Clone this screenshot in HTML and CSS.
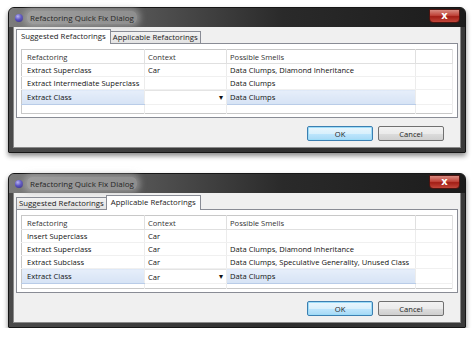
FILE: index.html
```html
<!DOCTYPE html>
<html>
  <head>
    <meta charset="utf-8" />
    <link rel="stylesheet" href="styles.css">
  </head>
  <body>
    <div class="dialog">
      <div class="titlebar">
        <span class="app-icon"></span>
        <span class="title">Refactoring Quick Fix Dialog</span>
        <span class="close">x</span>
      </div>
      <div class="client">
        <div class="tabs">
          <div class="tab active">Suggested Refactorings</div>
          <div class="tab">Applicable Refactorings</div>
        </div>
        <div class="tab-panel">
          <table class="grid">
            <colgroup>
              <col class="col-ref"><col class="col-ctx"><col class="col-smell"><col>
            </colgroup>
            <tr class="head"><td>Refactoring</td><td>Context</td><td>Possible Smells</td><td></td></tr>
            <tr><td>Extract Superclass</td><td>Car</td><td>Data Clumps, Diamond Inheritance</td><td></td></tr>
            <tr><td>Extract Intermediate Superclass</td><td></td><td>Data Clumps</td><td></td></tr>
            <tr class="selected">
              <td>Extract Class</td>
              <td class="combo-cell"><div class="combo"><span></span><span class="arrow">▾</span></div></td>
              <td>Data Clumps</td><td></td>
            </tr>
            <tr class="blank"><td></td><td></td><td></td><td></td></tr>
          </table>
        </div>
        <div class="buttons">
          <button class="btn default">OK</button>
          <button class="btn">Cancel</button>
        </div>
      </div>
    </div>

    <div class="dialog second">
      <div class="titlebar">
        <span class="app-icon"></span>
        <span class="title">Refactoring Quick Fix Dialog</span>
        <span class="close">x</span>
      </div>
      <div class="client">
        <div class="tabs">
          <div class="tab">Suggested Refactorings</div>
          <div class="tab active">Applicable Refactorings</div>
        </div>
        <div class="tab-panel">
          <table class="grid">
            <colgroup>
              <col class="col-ref"><col class="col-ctx"><col class="col-smell"><col>
            </colgroup>
            <tr class="head"><td>Refactoring</td><td>Context</td><td>Possible Smells</td><td></td></tr>
            <tr><td>Insert Superclass</td><td>Car</td><td></td><td></td></tr>
            <tr><td>Extract Superclass</td><td>Car</td><td>Data Clumps, Diamond Inheritance</td><td></td></tr>
            <tr><td>Extract Subclass</td><td>Car</td><td>Data Clumps, Speculative Generality, Unused Class</td><td></td></tr>
            <tr class="selected">
              <td>Extract Class</td>
              <td class="combo-cell"><div class="combo"><span>Car</span><span class="arrow">▾</span></div></td>
              <td>Data Clumps</td><td></td>
            </tr>
            <tr class="blank"><td></td><td></td><td></td><td></td></tr>
          </table>
        </div>
        <div class="buttons">
          <button class="btn default">OK</button>
          <button class="btn">Cancel</button>
        </div>
      </div>
    </div>
  </body>
</html>
```

FILE: styles.css
```css
body {
  margin: 0;
  padding: 7px 0 0 8px;
  background: #fff;
  font-family: "Open Sans", "DejaVu Sans", sans-serif;
  font-size: 7.6px;
  color: #111;
}

.dialog {
  width: 446px;
  padding: 0 5px 4px 5px;
  background: linear-gradient(90deg, #4a4a4a 0%, #2e2e2e 60%, #3a3a3a 100%);
  border: 1px solid #161616;
  border-radius: 6px 6px 1px 1px;
  box-sizing: content-box;
  box-shadow: 0 3px 5px rgba(0, 0, 0, 0.45);
}

.dialog.second {
  margin-top: 20px;
}

.titlebar {
  height: 19px;
  display: flex;
  align-items: center;
  position: relative;
  background: linear-gradient(90deg, #7c7c7c 0%, #5a5a5a 25%, #2a2a2a 60%, #1c1c1c 100%);
  margin: 0 -5px;
  padding: 0 6px;
  border-radius: 5px 5px 0 0;
}

.app-icon {
  width: 8px;
  height: 8px;
  border-radius: 50%;
  background: radial-gradient(circle at 35% 30%, #b9b6f0 0%, #5a52c4 45%, #2b2372 100%);
  margin-right: 4px;
  margin-top: 1px;
}

.title {
  font-size: 8px;
  color: #262626;
  padding: 1px 3px;
  background: rgba(190, 190, 190, 0.55);
  box-shadow: 0 0 6px 3px rgba(190, 190, 190, 0.55);
  border-radius: 5px;
}

.close {
  position: absolute;
  right: 5px;
  top: 1px;
  width: 31px;
  height: 14px;
  line-height: 12px;
  text-align: center;
  color: #fff;
  font-family: "DejaVu Sans", sans-serif;
  font-weight: 700;
  font-size: 10px;
  background: linear-gradient(#d88a80 0%, #c0443a 45%, #a21e16 55%, #c2463a 100%);
  border: 1px solid #4c1410;
  border-radius: 0 0 4px 4px;
  box-sizing: border-box;
}

.client {
  background: #f0f0f0;
  padding: 2px 2px 6px 2px;
  border: 1px solid #8a8a8a;
  border-top: none;
  margin: 0 -1px;
}

.tabs {
  display: flex;
  align-items: flex-end;
  height: 14px;
  position: relative;
  z-index: 1;
}

.tab {
  height: 11px;
  line-height: 11px;
  padding: 0 2px;
  border: 1px solid #898c95;
  border-bottom: none;
  background: linear-gradient(#f2f2f2, #e3e3e3);
  color: #222;
  font-size: 7.8px;
}

.tab.active {
  height: 14px;
  line-height: 13px;
  background: #fff;
  margin-bottom: -1px;
  padding: 0 4px;
}

.tab + .tab {
  margin-left: -1px;
}

.tab-panel {
  background: #fff;
  border: 1px solid #898c95;
  padding: 5px 4px 3px 4px;
}

.grid {
  width: 432px;
  border-collapse: collapse;
  table-layout: fixed;
  border: 1px solid #c8c8c8;
}

.col-ref {
  width: 123px;
}

.col-ctx {
  width: 82px;
}

.col-smell {
  width: 189px;
}

.grid td {
  height: 13px;
  padding: 0 3px;
  border-right: 1px solid #ececec;
  border-bottom: 1px solid #f0f0f0;
  white-space: nowrap;
  overflow: hidden;
  box-sizing: border-box;
  vertical-align: middle;
}

.grid td:first-child {
  padding-left: 5px;
}

.grid .head td {
  height: 14px;
  color: #333;
  border-bottom: 1px solid #e0e0e0;
  border-right: 1px solid #e0e0e0;
}

.grid .blank td {
  height: 9px;
  border-bottom: none;
}

.second .grid .blank td {
  height: 5px;
}

.grid .selected td:nth-child(1),
.grid .selected td:nth-child(3) {
  background: linear-gradient(#e6eefa, #d6e3f5);
  border-bottom: 1px solid #b9cce8;
}

.grid .combo-cell {
  padding: 0;
}

.combo {
  display: flex;
  justify-content: space-between;
  align-items: center;
  height: 13px;
  padding: 0 3px;
  background: #fff;
  border-top: 1px solid #e4e4e4;
}

.arrow {
  font-family: "DejaVu Sans", sans-serif;
  font-size: 8px;
  color: #111;
}

.buttons {
  display: flex;
  justify-content: flex-end;
  gap: 5px;
  margin-top: 8px;
  padding-right: 14px;
}

.btn {
  width: 66px;
  height: 15px;
  padding: 0;
  font-family: "Open Sans", "DejaVu Sans", sans-serif;
  font-size: 7.6px;
  color: #1e1e1e;
  background: linear-gradient(#f2f2f2 0%, #ebebeb 50%, #dddddd 51%, #cfcfcf 100%);
  border: 1px solid #707070;
  border-radius: 2px;
}

.btn.default {
  background: linear-gradient(#eaf6fd 0%, #d9f0fc 50%, #bee6fd 51%, #a7d9f5 100%);
  border-color: #3c7fb1;
  box-shadow: inset 0 0 0 1px #9ddcf8;
}
```
